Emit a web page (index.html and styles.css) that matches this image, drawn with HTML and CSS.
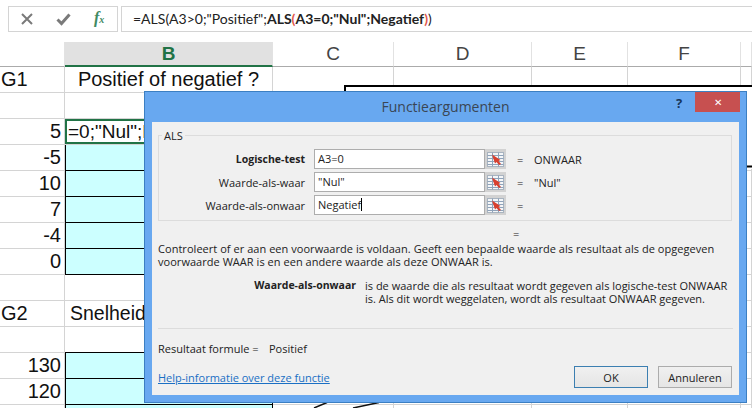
FILE: index.html
```html
<!DOCTYPE html>
<html lang="nl">
<head>
<meta charset="utf-8">
<title>Functieargumenten</title>
<link rel="stylesheet" href="styles.css">
</head>
<body>
<div class="app">
  <div class="bar">
    <div class="bar-btns">
      <svg class="ic" width="14" height="14" viewBox="0 0 14 14"><path d="M2 2L12 12M12 2L2 12" stroke="#7a7a7a" stroke-width="2" fill="none"/></svg>
      <svg class="ic" width="15" height="14" viewBox="0 0 15 14"><path d="M1.500 7.500L5.500 11.500L13.500 2.500" stroke="#7a7a7a" stroke-width="3" fill="none"/></svg>
      <span class="fx">f<sub>x</sub></span>
    </div>
    <div class="formula">=ALS(A3&gt;0;"Positief";<b>ALS<span class="red">(</span>A3=0;"Nul";Negatief<span class="red">)</span></b>)</div>
  </div>
  <div class="sheet">
    <div class="gridwrap">
      <table class="grid">
        <colgroup><col class="ca"><col class="cb"><col class="cc"><col class="cd"><col class="ce"><col class="cf"><col class="cg"></colgroup>
        <tr class="head"><th></th><th class="cur">B</th><th>C</th><th>D</th><th>E</th><th>F</th><th></th></tr>
        <tr><td class="l">G1</td><td class="c">Positief of negatief ?</td><td></td><td></td><td></td><td></td><td></td></tr>
        <tr><td></td><td></td><td></td><td></td><td></td><td></td><td></td></tr>
        <tr><td class="r">5</td><td class="active">=0;"Nul";N</td><td></td><td></td><td></td><td></td><td></td></tr>
        <tr><td class="r">-5</td><td class="fill"></td><td></td><td></td><td></td><td></td><td></td></tr>
        <tr><td class="r">10</td><td class="fill"></td><td></td><td></td><td></td><td></td><td></td></tr>
        <tr><td class="r">7</td><td class="fill"></td><td></td><td></td><td></td><td></td><td></td></tr>
        <tr><td class="r">-4</td><td class="fill"></td><td></td><td></td><td></td><td></td><td></td></tr>
        <tr><td class="r">0</td><td class="fill"></td><td></td><td></td><td></td><td></td><td></td></tr>
        <tr><td></td><td></td><td></td><td></td><td></td><td></td><td></td></tr>
        <tr><td class="l">G2</td><td class="l2">Snelheid</td><td></td><td></td><td></td><td></td><td></td></tr>
        <tr><td></td><td class="above"></td><td></td><td></td><td></td><td></td><td></td></tr>
        <tr><td class="r">130</td><td class="fill"></td><td></td><td></td><td></td><td></td><td></td></tr>
        <tr><td class="r">120</td><td class="fill"></td><td></td><td></td><td></td><td></td><td></td></tr>
        <tr><td></td><td class="fill"></td><td></td><td></td><td></td><td></td><td></td></tr>
      </table>
      <svg class="chart" width="408" height="84" viewBox="0 0 408 84">
        <rect x="0" y="1" width="408" height="83" fill="#fff"/>
        <path d="M1 84V1H408" fill="none" stroke="#000" stroke-width="2"/>
        <path d="M403 81.500H408" stroke="#000" stroke-width="2"/>
      </svg>
      <svg class="lines" width="70" height="6" viewBox="0 0 70 6"><path d="M1 6L14 0.500M40 6L66 0.500" stroke="#111" stroke-width="1.500" fill="none"/></svg>
    </div>
    <section class="dialog">
      <header class="d-title">
        <span class="d-name">Functieargumenten</span>
        <span class="d-help">?</span>
        <span class="d-close">✕</span>
      </header>
      <div class="d-body">
        <fieldset class="group">
          <legend>ALS</legend>
          <div class="arg">
            <label class="strong">Logische-test</label>
            <span class="input">A3=0</span>
            <span class="pick"><svg width="17" height="15" viewBox="0 0 17 15"><use href="#pick"/></svg></span>
            <span class="eq">=</span><span class="val">ONWAAR</span>
          </div>
          <div class="arg">
            <label>Waarde-als-waar</label>
            <span class="input">"Nul"</span>
            <span class="pick"><svg width="17" height="15" viewBox="0 0 17 15"><use href="#pick"/></svg></span>
            <span class="eq">=</span><span class="val">"Nul"</span>
          </div>
          <div class="arg">
            <label>Waarde-als-onwaar</label>
            <span class="input">Negatief<i class="caret"></i></span>
            <span class="pick"><svg width="17" height="15" viewBox="0 0 17 15"><use href="#pick"/></svg></span>
            <span class="eq">=</span><span class="val"></span>
          </div>
        </fieldset>
        <div class="eq-line"><span class="eq">=</span></div>
        <p class="desc">Controleert of er aan een voorwaarde is voldaan. Geeft een bepaalde waarde als resultaat als de opgegeven<br>voorwaarde WAAR is en een andere waarde als deze ONWAAR is.</p>
        <div class="detail">
          <b class="detail-name">Waarde-als-onwaar</b>
          <p class="detail-text">is de waarde die als resultaat wordt gegeven als logische-test ONWAAR<br>is. Als dit wordt weggelaten, wordt als resultaat ONWAAR gegeven.</p>
        </div>
        <hr class="sep">
        <div class="result"><span class="res-l">Resultaat formule =</span><span>Positief</span></div>
        <div class="foot">
          <a class="help" href="#">Help-informatie over deze functie</a>
          <button class="btn def">OK</button>
          <button class="btn">Annuleren</button>
        </div>
      </div>
    </section>
  </div>
</div>
<svg class="defs" width="0" height="0">
  <defs>
    <g id="pick">
      <rect x="0.500" y="0.500" width="16" height="14" fill="#f4f6f8" stroke="#a9b4c0"/>
      <path d="M0.500 3.500H16.500M0.500 6.500H16.500M0.500 9.500H16.500M0.500 12.500H16.500M5.500 0.500V14.500M11.500 0.500V14.500" stroke="#8fa3ba" fill="none"/>
      <path d="M5 2.500L13.500 8L11.500 9L14 12L12 13L9.500 10L8 11.500Z" fill="#d8402f"/>
    </g>
  </defs>
</svg>
</body>
</html>
```
FILE: styles.css
```css
* { box-sizing: border-box; }
html, body { margin: 0; padding: 0; }
body { width: 752px; height: 408px; overflow: hidden; background: #fff; font-family: "Liberation Sans", Arial, sans-serif; }
.app { display: flex; flex-direction: column; width: 752px; height: 408px; overflow: hidden; }

.bar { display: flex; gap: 3px; height: 32px; padding: 6px 0 0 8px; flex: none; }
.bar-btns { width: 110px; height: 26px; border: 1px solid #d4d4d4; display: flex; align-items: center; padding-left: 11px; }
.ic { flex: none; }
.ic + .ic { margin-left: 22px; }
.fx { margin-left: 23px; font-family: "Liberation Serif", serif; font-style: italic; font-weight: bold; color: #3f8a63; font-size: 16px; line-height: 16px; }
.fx sub { font-size: 10px; vertical-align: baseline; }
.formula { flex: 1; height: 26px; border: 1px solid #d4d4d4; border-right: 0; padding-left: 11px; font-family: Lato, sans-serif; font-size: 14px; line-height: 24px; color: #222; white-space: nowrap; }
.formula .red { color: #e2574c; }

.sheet { position: relative; flex: 1; margin-top: 10px; }
.gridwrap { position: relative; width: 752px; height: 366px; overflow: hidden; }
.grid { table-layout: fixed; border-collapse: separate; border-spacing: 0; width: 752px; }
.ca { width: 65px; } .cb { width: 208px; } .cc { width: 121px; } .cd { width: 138px; } .ce { width: 96px; } .cf { width: 113px; } .cg { width: 11px; }
.grid th, .grid td { padding: 0; height: 26px; border-right: 1px solid #d4d4d4; border-bottom: 1px solid #d4d4d4; font-size: 20px; font-weight: normal; color: #111; white-space: nowrap; overflow: hidden; }
.grid th { height: 25px; color: #444; font-size: 19px; border-bottom: 1px solid #ababab; border-right-color: #e2e2e2; }
.grid th.cur { background: #e1e1e1; color: #217346; font-weight: bold; border-bottom: 2px solid #217346; }
.grid .l { padding-left: 1px; }
.grid .l2 { padding-left: 5px; font-size: 19.500px; }
.grid .c { text-align: center; }
.grid .r { text-align: right; padding-right: 3px; }
.grid .above { border-bottom-color: #000; }
.grid .fill { background: #ccffff; border-right: 1px solid #000; border-bottom: 1px solid #000; border-left: 1px solid #000; }
.grid .active { background: #fff; box-shadow: inset 0 0 0 2px #217346; padding-left: 3px; font-size: 19px; }
.chart { position: absolute; left: 344px; top: 43px; }
.lines { position: absolute; left: 313px; top: 360px; }
.defs { position: absolute; }

.dialog { position: absolute; left: 144px; top: 49px; width: 603px; height: 312px; background: #68a8f0; border: 1px solid #3c7fc2; padding: 30px 7px 7px 7px; font-family: "Open Sans", sans-serif; font-size: 11px; color: #222; }
.d-title { position: absolute; left: 0; top: 0; right: 0; height: 30px; }
.d-name { position: absolute; left: 0; right: 0; top: 5px; text-align: center; font-size: 14px; line-height: 20px; color: #3a4654; }
.d-help { position: absolute; left: 531px; top: 2px; font-weight: bold; font-size: 13px; line-height: 18px; color: #17365c; }
.d-close { position: absolute; left: 550px; top: 0; width: 45px; height: 20px; background: #c75050; color: #fff; text-align: center; font-size: 10px; line-height: 20px; }
.d-body { height: 273px; background: #f0f0f0; padding: 7px 6px 0 6px; display: flex; flex-direction: column; }
.group { margin: 0; width: 574px; height: 92px; border: 1px solid #dcdcdc; padding: 7px 0 0 0; flex: none; }
.group legend { padding: 0 2px; margin-left: 3px; line-height: 13px; }
.arg { display: flex; align-items: center; height: 20px; margin-bottom: 3px; }
.arg label { width: 146px; text-align: right; }
.arg label.strong { font-weight: bold; font-size: 10.500px; }
.input { margin-left: 9px; width: 171px; height: 20px; background: #fff; border: 1px solid #adadad; padding-left: 3px; line-height: 18px; }
.caret { display: inline-block; width: 1px; height: 13px; background: #000; vertical-align: -2px; }
.pick { width: 21px; height: 20px; background: #d2d2d2; display: flex; align-items: center; justify-content: center; }
.eq { width: 14px; margin-left: 11px; }
.val { margin-left: 3px; }
.eq-line { height: 13px; margin-top: 5px; padding-left: 355px; }
.eq-line .eq { margin: 0; display: block; }
.desc { margin: 3px 0 0 0; line-height: 13px; white-space: nowrap; letter-spacing: 0.040px; }
.detail { display: flex; margin-top: 11px; white-space: nowrap; }
.detail-name { width: 198px; text-align: right; font-size: 10.500px; line-height: 13px; }
.detail-text { margin: 0 0 0 9px; line-height: 13px; }
.sep { width: 575px; height: 1px; margin: 23px 0 0 0; border: 0; background: #dcdcdc; flex: none; }
.result { display: flex; margin-top: 13px; line-height: 14px; }
.res-l { width: 111px; }
.foot { display: flex; align-items: center; margin-top: 10px; width: 574px; }
.help { margin-right: auto; color: #1a6fc4; text-decoration: underline; }
.btn { width: 74px; height: 22px; margin-left: 10px; padding: 0; border: 1px solid #acacac; background: linear-gradient(#f0f0f0, #e5e5e5); font-family: inherit; font-size: 11px; color: #222; }
.btn.def { border-color: #3c7fb1; margin-left: 0; }
```
